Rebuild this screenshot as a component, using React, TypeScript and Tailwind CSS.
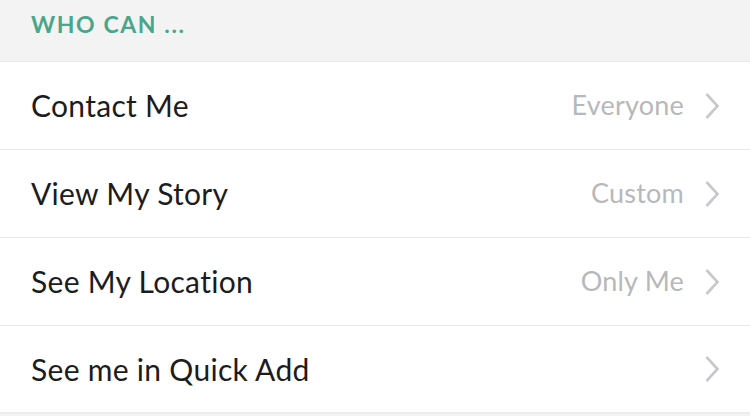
import React from "react";

const rows = [
  { label: "Contact Me", value: "Everyone" },
  { label: "View My Story", value: "Custom" },
  { label: "See My Location", value: "Only Me" },
  { label: "See me in Quick Add", value: "" },
];

function Chevron() {
  return (
    <svg width="16" height="28" viewBox="0 0 16 28" className="shrink-0">
      <path d="M2.5 2 L13.5 14 L2.5 26" fill="none" stroke="#c7c7cc" strokeWidth="2.6" />
    </svg>
  );
}

export default function App() {
  return (
    <div className="w-[750px] h-[416px] bg-[#f3f3f3] overflow-hidden" style={{ fontFamily: "Lato, 'Open Sans', sans-serif" }}>
      <div className="h-[62px] pl-[31px] pt-[7px] text-[23px] font-bold tracking-[1.6px] text-[#4aa68a] border-b border-[#e8e8e8]">
        WHO CAN ...
      </div>
      <div className="bg-white">
        {rows.map((r, i) => (
          <div
            key={r.label}
            className={`h-[88px] flex items-center pl-[31px] pr-[30px] ${i < rows.length - 1 ? "border-b border-[#e8e8e8]" : "border-b-2 border-[#ececec]"}`}
          >
            <div className="flex-1 text-[30px] tracking-[0.3px] text-[#1c1c1e]">{r.label}</div>
            <div className="text-[27px] tracking-[0.2px] text-[#b7b8bb] mr-[20px]">{r.value}</div>
            <Chevron />
          </div>
        ))}
      </div>
    </div>
  );
}
